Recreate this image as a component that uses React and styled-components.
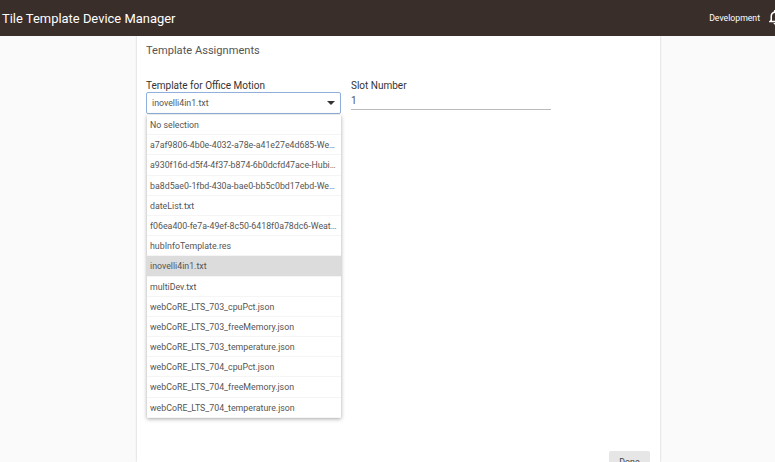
import React from "react";
import styled, { createGlobalStyle } from "styled-components";

const Global = createGlobalStyle`
  html, body { margin: 0; padding: 0; height: 100%; overflow: hidden; background: #fafafa; font-family: Roboto, "Liberation Sans", sans-serif; }
  #root { height: 100%; }
`;

const Page = styled.div`
  height: 462px;
  overflow: hidden;
  display: flex;
  flex-direction: column;
`;

const AppBar = styled.header`
  height: 36px;
  flex: none;
  background: #3a2e2b;
  color: #fff;
  display: flex;
  align-items: center;
  padding: 0 0 0 2px;
  position: relative;
  z-index: 2;
  overflow: hidden;
`;

const Title = styled.h1`
  margin: 0;
  flex: 1;
  font-size: 12.95px;
  font-weight: 400;
`;

const Env = styled.span`
  font-size: 8.7px;
  font-weight: 400;
  margin-right: 6px;
`;

const BellIcon = styled.svg`
  width: 18px;
  height: 18px;
  flex: none;
  margin: -2px -9px 0 0;
  fill: #fff;
`;

const Panel = styled.main`
  width: 523px;
  margin-left: 137px;
  flex: 1;
  background: #fff;
  box-shadow: 0 0 2px rgba(0, 0, 0, 0.22);
  padding: 7px 10px 0 9px;
  box-sizing: border-box;
  display: flex;
  flex-direction: column;
`;

const Heading = styled.h2`
  margin: 0;
  font-size: 11.1px;
  line-height: 15px;
  font-weight: 400;
  color: #555;
`;

const Fields = styled.div`
  display: flex;
  gap: 10px;
  margin-top: 22px;
`;

const Field = styled.div`
  position: relative;
  width: ${(p) => p.$width}px;
`;

const Label = styled.label`
  display: block;
  font-size: 10px;
  line-height: 12px;
  color: #333;
`;

const SelectBox = styled.div`
  height: 22px;
  box-sizing: border-box;
  border: 1px solid #8fb0dc;
  border-radius: 2px;
  padding: 0 4px 0 5px;
  display: flex;
  align-items: center;
  justify-content: space-between;
  font-size: 8.8px;
  color: #555;
`;

const Caret = styled.span`
  width: 0;
  height: 0;
  border-left: 4px solid transparent;
  border-right: 4px solid transparent;
  border-top: 4px solid #333;
  margin-right: 1px;
`;

const NumberInput = styled.div`
  height: 18px;
  box-sizing: border-box;
  border-bottom: 1px solid #bbb;
  padding-top: 2px;
  font-size: 10px;
  line-height: 14px;
  color: #555;
`;

const Menu = styled.ul`
  position: absolute;
  top: 35px;
  left: 0.5px;
  right: 0;
  margin: 0;
  padding: 0;
  list-style: none;
  background: #fff;
  box-shadow: 0 1px 4px rgba(0, 0, 0, 0.35);
`;

const Option = styled.li`
  height: 20.2px;
  line-height: 20.5px;
  box-sizing: border-box;
  padding: 0 7px 0 3.5px;
  font-size: 8.8px;
  color: #555;
  white-space: nowrap;
  background: ${(p) => (p.$selected ? "#dcdcdc" : "#fff")};
  border-bottom: 1px solid #f5f5f5;
`;

const Actions = styled.div`
  margin-top: auto;
  display: flex;
  justify-content: flex-end;
  margin-bottom: -10px;
`;

const DoneButton = styled.button`
  width: 41px;
  height: 21px;
  border: 0;
  border-radius: 2px;
  background: #e6e6e6;
  color: #444;
  font-family: inherit;
  font-size: 8.8px;
  padding: 0;
`;

const options = [
  "No selection",
  "a7af9806-4b0e-4032-a78e-a41e27e4d685-We…",
  "a930f16d-d5f4-4f37-b874-6b0dcfd47ace-Hubi…",
  "ba8d5ae0-1fbd-430a-bae0-bb5c0bd17ebd-We…",
  "dateList.txt",
  "f06ea400-fe7a-49ef-8c50-6418f0a78dc6-Weat…",
  "hubInfoTemplate.res",
  "inovelli4in1.txt",
  "multiDev.txt",
  "webCoRE_LTS_703_cpuPct.json",
  "webCoRE_LTS_703_freeMemory.json",
  "webCoRE_LTS_703_temperature.json",
  "webCoRE_LTS_704_cpuPct.json",
  "webCoRE_LTS_704_freeMemory.json",
  "webCoRE_LTS_704_temperature.json",
];

export default function App() {
  return (
    <Page>
      <Global />
      <AppBar>
        <Title>Tile Template Device Manager</Title>
        <Env>Development</Env>
        <BellIcon viewBox="0 0 24 24">
          <path d="M12 22c1.1 0 2-.9 2-2h-4c0 1.1.89 2 2 2zm6-6v-5c0-3.07-1.64-5.64-4.5-6.32V4c0-.83-.67-1.5-1.5-1.5s-1.5.67-1.5 1.5v.68C7.63 5.36 6 7.92 6 11v5l-2 2v1h16v-1l-2-2zm-2 1H8v-6c0-2.48 1.51-4.5 4-4.5s4 2.02 4 4.5v6z" />
        </BellIcon>
      </AppBar>
      <Panel>
        <Heading>Template Assignments</Heading>
        <Fields>
          <Field $width={195}>
            <Label>Template for Office Motion</Label>
            <SelectBox>
              inovelli4in1.txt
              <Caret />
            </SelectBox>
            <Menu>
              {options.map((o) => (
                <Option key={o} $selected={o === "inovelli4in1.txt"}>
                  {o}
                </Option>
              ))}
            </Menu>
          </Field>
          <Field $width={200}>
            <Label>Slot Number</Label>
            <NumberInput>1</NumberInput>
          </Field>
        </Fields>
        <Actions>
          <DoneButton>Done</DoneButton>
        </Actions>
      </Panel>
    </Page>
  );
}
